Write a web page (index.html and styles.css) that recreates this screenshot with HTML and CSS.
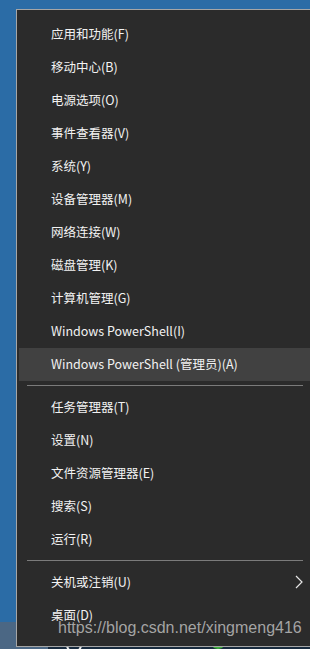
FILE: index.html
```html
<!DOCTYPE html>
<html>
<head>
<title>Win+X</title>
<link rel="stylesheet" href="styles.css">
</head>
<body>
<div class="desktop">
  <div class="wallpaper"></div>
  <div class="taskbar">
    <div class="start-btn"><span class="win-logo"></span></div>
    <span class="tb-icon ring"></span>
    <span class="tb-icon view"></span>
    <span class="tb-icon purple"></span>
    <span class="tb-icon green"></span>
    <span class="tb-icon folder"></span>
    <span class="tb-icon red"></span>
  </div>

  <ul class="menu">
    <li class="item">应用和功能(F)</li>
    <li class="item">移动中心(B)</li>
    <li class="item">电源选项(O)</li>
    <li class="item">事件查看器(V)</li>
    <li class="item">系统(Y)</li>
    <li class="item">设备管理器(M)</li>
    <li class="item">网络连接(W)</li>
    <li class="item">磁盘管理(K)</li>
    <li class="item">计算机管理(G)</li>
    <li class="item">Windows PowerShell(I)</li>
    <li class="item hover">Windows PowerShell (管理员)(A)</li>
    <li class="sep"></li>
    <li class="item">任务管理器(T)</li>
    <li class="item">设置(N)</li>
    <li class="item">文件资源管理器(E)</li>
    <li class="item">搜索(S)</li>
    <li class="item">运行(R)</li>
    <li class="sep"></li>
    <li class="item sub">关机或注销(U)
      <svg class="chev" width="8" height="14" viewBox="0 0 8 14"><polyline points="1,1 7,7 1,13" fill="none" stroke="#e6e6e6" stroke-width="1.2"/></svg>
    </li>
    <li class="item">桌面(D)</li>
  </ul>

  <div class="watermark">https://blog.csdn.net/xingmeng416</div>
</div>
</body>
</html>
```

FILE: styles.css
```css
body {margin: 0; overflow: hidden;}
.desktop {width: 310px; height: 649px; display: flex; flex-direction: column; position: relative; overflow: hidden; font-family: "Noto Sans CJK SC", "Noto Sans", sans-serif;}
.wallpaper {flex: 1; background: #2b6ca6;}
.taskbar {height: 27px; background: #172a3e; display: flex; align-items: flex-end;}
.start-btn {width: 48px; height: 27px; background: #4b6784; display: flex; align-items: flex-end; justify-content: center;}
.win-logo {width: 14px; height: 6px; margin-bottom: 4px; margin-left: 8px; background: linear-gradient(90deg, #3a9ae8 6px, transparent 6px, transparent 8px, #3a9ae8 8px);}
.tb-icon {display: block; height: 8px; margin-bottom: 2px;}
.tb-icon.ring {width: 12px; height: 12px; margin-left: 18px; margin-bottom: -4px; border: 2px solid #e8e8e8; border-radius: 50%;}
.tb-icon.view {width: 9px; height: 6px; margin-left: 30px; margin-bottom: 3px; border: 1px solid #e8e8e8; border-bottom: none;}
.tb-icon.purple {width: 20px; margin-left: 36px; background: #7b3d8f;}
.tb-icon.green {width: 18px; height: 10px; margin-left: 30px; margin-bottom: 0; background: #3fae3c; border-radius: 0 0 9px 9px;}
.tb-icon.folder {width: 20px; margin-left: 30px; background: linear-gradient(90deg, #e9b737 40%, #3a8fd9 40%, #3a8fd9 75%, #e9b737 75%);}
.tb-icon.red {width: 6px; margin-left: 26px; background: #d2442c;}

.menu {position: absolute; left: 16px; top: 9px; width: 300px; height: 628px; margin: 0; padding: 8px 0 0; list-style: none; background: #2b2b2b; border: 1px solid #a6a6a6; color: #f2f2f2; font-size: 12.5px;}
.item {height: 33px; line-height: 31px; margin: 0 4px 0 2px; padding-left: 32px; position: relative; white-space: nowrap;}
.item.hover {background: #414141;}
.sep {height: 1px; margin: 4px 14px 5px 10px; background: #7b7b7b;}
.chev {position: absolute; left: 276px; top: 9px;}

.watermark {position: absolute; left: 58px; top: 619px; font-family: "Liberation Sans", Arial, sans-serif; font-size: 16px; color: rgba(200, 200, 200, 0.78); white-space: nowrap;}
```
